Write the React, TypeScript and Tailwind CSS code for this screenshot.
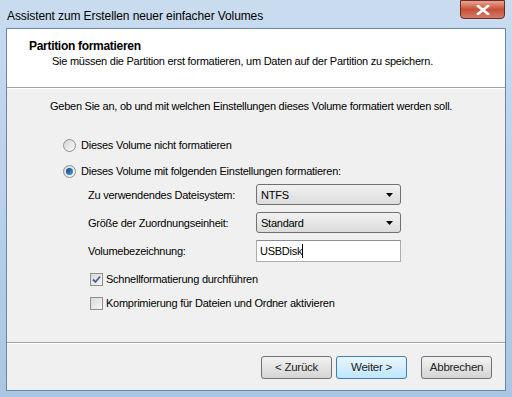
import React from 'react';

const font = { fontFamily: '"Liberation Sans", Arial, sans-serif' };

function Radio({ checked }: { checked?: boolean }) {
  return (
    <span className="w-[13px] h-[13px] shrink-0 rounded-full border border-[#8e8f8f] bg-gradient-to-br from-[#d4d4d4] to-[#fafafa] flex items-center justify-center">
      {checked && <span className="w-[7px] h-[7px] rounded-full bg-gradient-to-br from-[#0b3f7a] to-[#4aa3e8]" />}
    </span>
  );
}

function Check({ checked }: { checked?: boolean }) {
  return (
    <span className="w-[13px] h-[13px] shrink-0 border border-[#8e8f8f] bg-gradient-to-br from-[#d8d8d8] to-[#f8f8f8] flex items-center justify-center">
      {checked && (
        <svg width="9" height="9" viewBox="0 0 9 9">
          <path d="M1 4.5 L3.5 7 L8 1.5" fill="none" stroke="#4a5f97" strokeWidth="1.8" />
        </svg>
      )}
    </span>
  );
}

function Select({ value }: { value: string }) {
  return (
    <div className="w-[145px] h-[21px] rounded-[3px] border border-[#707070] bg-gradient-to-b from-[#f2f2f2] to-[#dcdcdc] flex items-center justify-between pl-[4px] pr-[7px] text-black">
      <span>{value}</span>
      <svg width="7" height="4" viewBox="0 0 7 4"><path d="M0 0 H7 L3.5 4 Z" fill="#000" /></svg>
    </div>
  );
}

function Button({ label, focus }: { label: string; focus?: boolean }) {
  return (
    <div
      className={`w-[71px] h-[23px] rounded-[3px] border flex items-center justify-center text-[#222] ${
        focus ? 'border-[#3c7fb1] bg-gradient-to-b from-[#eaf6fd] to-[#bee6fd]' : 'border-[#707070] bg-gradient-to-b from-[#f2f2f2] to-[#d5d5d5]'
      }`}
    >
      {label}
    </div>
  );
}

export default function App() {
  return (
    <div style={font} className="w-[512px] h-[397px] bg-gradient-to-b from-[#c9dcf0] via-[#b9d1ea] to-[#a9c6e4] flex flex-col overflow-hidden">
      <div className="h-[28px] flex items-start justify-between pl-[7px]">
        <span className="mt-[7px] text-[12px] tracking-[-0.1px] text-black">Assistent zum Erstellen neuer einfacher Volumes</span>
        <div className="mr-[7px] w-[45px] h-[19px] rounded-b-[4px] border border-[#6b2b22] bg-gradient-to-b from-[#e8a493] via-[#c74f34] to-[#d17c68] flex items-center justify-center">
          <svg width="14" height="10" viewBox="0 0 14 10">
            <path d="M2 1 L12 9 M12 1 L2 9" stroke="#fff" strokeWidth="2.6" strokeLinecap="square" />
          </svg>
        </div>
      </div>
      <div className="mx-[6px] flex-1 border border-[#6b86a3] bg-[#f0f0f0] flex flex-col text-[11px] leading-[14px] tracking-[-0.25px] text-black">
        <div className="h-[59px] bg-white border-b border-[#a0a0a0] pl-[22px] pt-[10px]">
          <div className="font-bold text-[12px] tracking-[-0.3px]">Partition formatieren</div>
          <div className="pl-[23px] mt-[1px]">Sie müssen die Partition erst formatieren, um Daten auf der Partition zu speichern.</div>
        </div>
        <div className="flex-1 flex flex-col pl-[43px] pt-[10px] border-b border-[#a0a0a0] border-t border-t-white">
          <div>Geben Sie an, ob und mit welchen Einstellungen dieses Volume formatiert werden soll.</div>
          <div className="mt-[25px] pl-[13px] flex flex-col gap-[12px]">
            <div className="flex items-center gap-[5px]"><Radio /> <span>Dieses Volume nicht formatieren</span></div>
            <div className="flex items-center gap-[5px]"><Radio checked /> <span>Dieses Volume mit folgenden Einstellungen formatieren:</span></div>
          </div>
          <div className="pl-[38px] mt-[6px] grid grid-cols-[168px_auto] items-center gap-y-[7px]">
            <span>Zu verwendendes Dateisystem:</span>
            <Select value="NTFS" />
            <span>Größe der Zuordnungseinheit:</span>
            <Select value="Standard" />
            <span>Volumebezeichnung:</span>
            <div className="w-[145px] h-[22px] border border-[#abadb3] border-t-[#8a8d93] bg-white flex items-center pl-[3px]">
              USBDisk<span className="w-px h-[14px] bg-black" />
            </div>
          </div>
          <div className="pl-[40px] mt-[10px] flex flex-col gap-[10px]">
            <div className="flex items-center gap-[3px]"><Check checked /> <span>Schnellformatierung durchführen</span></div>
            <div className="flex items-center gap-[3px]"><Check /> <span>Komprimierung für Dateien und Ordner aktivieren</span></div>
          </div>
        </div>
        <div className="h-[47px] flex items-center justify-end pr-[13px] border-t border-white text-[11.5px]">
          <div className="flex gap-[4px]">
            <Button label="< Zurück" />
            <Button label="Weiter >" focus />
          </div>
          <div className="ml-[14px]"><Button label="Abbrechen" /></div>
        </div>
      </div>
      <div className="h-[6px]" />
    </div>
  );
}
